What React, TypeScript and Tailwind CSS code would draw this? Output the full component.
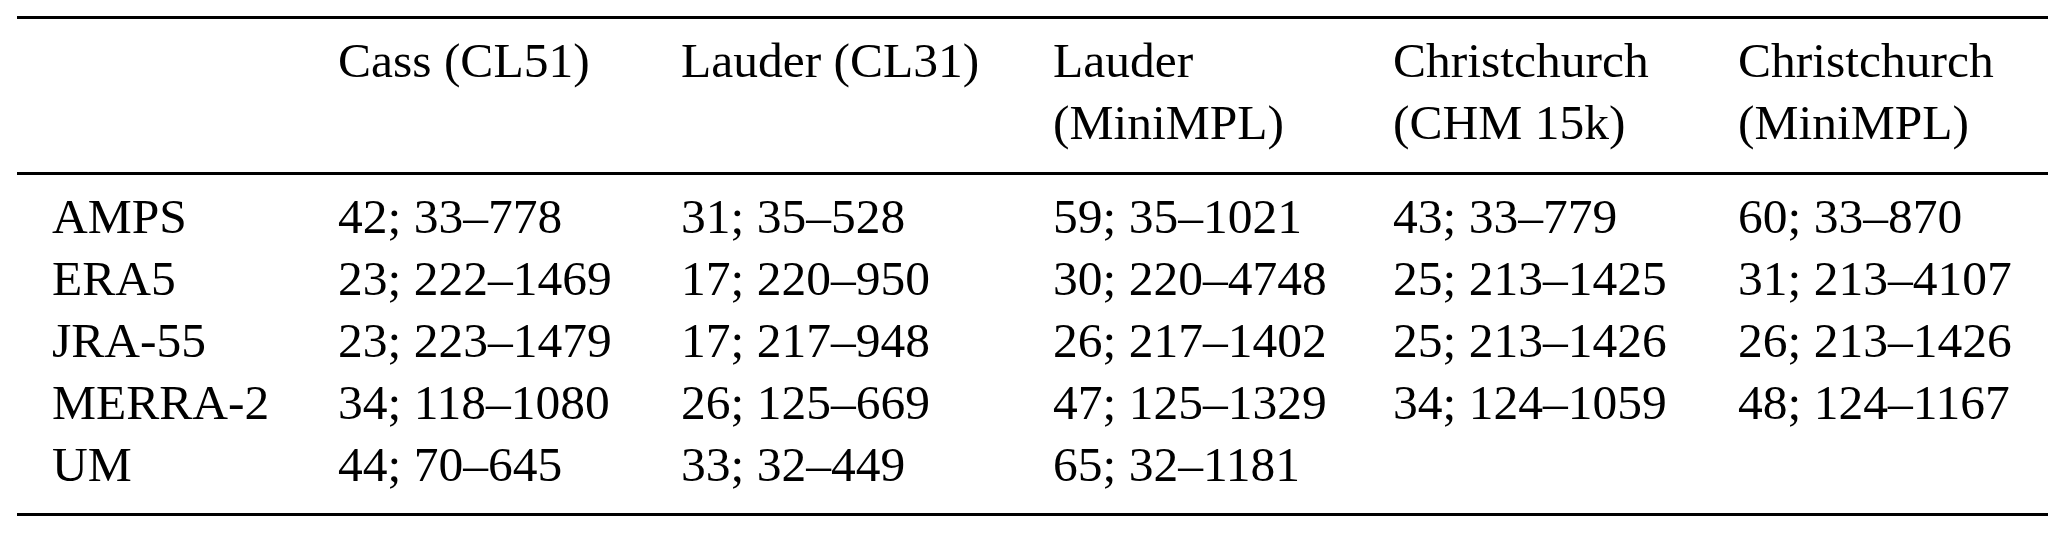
const headers: string[][] = [
  [],
  ["Cass (CL51)"],
  ["Lauder (CL31)"],
  ["Lauder", "(MiniMPL)"],
  ["Christchurch", "(CHM 15k)"],
  ["Christchurch", "(MiniMPL)"],
];

const rows: string[][] = [
  ["AMPS", "42; 33–778", "31; 35–528", "59; 35–1021", "43; 33–779", "60; 33–870"],
  ["ERA5", "23; 222–1469", "17; 220–950", "30; 220–4748", "25; 213–1425", "31; 213–4107"],
  ["JRA-55", "23; 223–1479", "17; 217–948", "26; 217–1402", "25; 213–1426", "26; 213–1426"],
  ["MERRA-2", "34; 118–1080", "26; 125–669", "47; 125–1329", "34; 124–1059", "48; 124–1167"],
  ["UM", "44; 70–645", "33; 32–449", "65; 32–1181", "", ""],
];

const grid = "grid grid-cols-[321px_343px_372px_340px_345px_310px]";

export default function App() {
  return (
    <div className="w-[2067px] h-[534px] bg-white text-black pt-[16px] pl-[17px] font-['Liberation_Serif','Times_New_Roman',serif] text-[49.5px] leading-[62px]">
      <div className="w-[2031px] border-t-[3px] border-b-[3px] border-black">
        <div className={`${grid} pt-[11px] pb-[18px] border-b-[3px] border-black`}>
          {headers.map((lines, i) => (
            <div key={i} className={i === 0 ? "pl-[35px]" : ""}>
              {lines.map((l) => (
                <div key={l} className="whitespace-nowrap">{l}</div>
              ))}
            </div>
          ))}
        </div>
        <div className="pt-[11px] pb-[17px]">
          {rows.map((r) => (
            <div key={r[0]} className={grid}>
              {r.map((c, i) => (
                <div key={i} className={`whitespace-nowrap h-[62px] ${i === 0 ? "pl-[35px]" : ""}`}>
                  {c}
                </div>
              ))}
            </div>
          ))}
        </div>
      </div>
    </div>
  );
}
